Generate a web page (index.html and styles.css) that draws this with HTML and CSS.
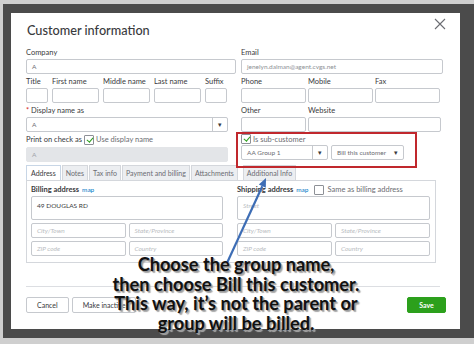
FILE: index.html
```html
<!DOCTYPE html>
<html lang="en">
<head>
    <meta charset="UTF-8">
    <meta name="viewport" content="width=device-width, initial-scale=1.0">
    <title>Customer information</title>
    <link rel="stylesheet" href="styles.css">
</head>
<body>
<div class="screen">
    <div class="frame">
        <div class="modal">
            <div class="modal-head">
                <h1>Customer information</h1>
                <svg class="close" width="12" height="12" viewBox="0 0 12 12"><path d="M1 1L11 11M11 1L1 11" stroke="#6b6c72" stroke-width="1.1" fill="none"/></svg>
            </div>

            <div class="form-top">
                <div class="col left">
                    <div class="field">
                        <label>Company</label>
                        <div class="input">A</div>
                    </div>
                    <div class="name-row">
                        <div class="field"><label>Title</label><div class="input"></div></div>
                        <div class="field"><label>First name</label><div class="input"></div></div>
                        <div class="field"><label>Middle name</label><div class="input"></div></div>
                        <div class="field"><label>Last name</label><div class="input"></div></div>
                        <div class="field"><label>Suffix</label><div class="input"></div></div>
                    </div>
                    <div class="field">
                        <label><span class="req">*</span> Display name as</label>
                        <div class="input select display-name"><span class="val">A</span><span class="arrow">&#9662;</span></div>
                    </div>
                    <div class="check-line">
                        Print on check as <span class="cb checked"></span> <span class="muted">Use display name</span>
                    </div>
                    <div class="input disabled">A</div>
                </div>

                <div class="col right">
                    <div class="field">
                        <label>Email</label>
                        <div class="input email">jenelyn.dalman@agent.cvgs.net</div>
                    </div>
                    <div class="phone-row">
                        <div class="field"><label>Phone</label><div class="input"></div></div>
                        <div class="field"><label>Mobile</label><div class="input"></div></div>
                        <div class="field"><label>Fax</label><div class="input"></div></div>
                    </div>
                    <div class="other-row">
                        <div class="field"><label>Other</label><div class="input"></div></div>
                        <div class="field"><label>Website</label><div class="input"></div></div>
                    </div>
                    <div class="check-line sub">
                        <span class="cb checked"></span> <span class="muted">Is sub-customer</span>
                    </div>
                    <div class="sub-row">
                        <div class="input select group"><span class="val">AA Group 1</span><span class="arrow">&#9662;</span></div>
                        <div class="input select bill"><span class="val">Bill this customer</span><span class="arrow">&#9662;</span></div>
                    </div>
                </div>
            </div>

            <div class="tabs">
                <span class="tab active">Address</span>
                <span class="tab">Notes</span>
                <span class="tab">Tax info</span>
                <span class="tab">Payment and billing</span>
                <span class="tab">Attachments</span>
                <span class="tab last">Additional Info</span>
            </div>
            <div class="panel">
                <div class="addr">
                    <div class="addr-head">Billing address <a>map</a></div>
                    <div class="input area">49 DOUGLAS RD</div>
                    <div class="pair">
                        <div class="input ph">City/Town</div>
                        <div class="input ph">State/Province</div>
                    </div>
                    <div class="pair">
                        <div class="input ph">ZIP code</div>
                        <div class="input ph">Country</div>
                    </div>
                </div>
                <div class="addr">
                    <div class="addr-head">Shipping address <a>map</a> <span class="cb"></span> <span class="muted">Same as billing address</span></div>
                    <div class="input area ph">Street</div>
                    <div class="pair">
                        <div class="input ph">City/Town</div>
                        <div class="input ph">State/Province</div>
                    </div>
                    <div class="pair">
                        <div class="input ph">ZIP code</div>
                        <div class="input ph">Country</div>
                    </div>
                </div>
            </div>

            <div class="footer">
                <div class="btns">
                    <span class="btn">Cancel</span>
                    <span class="btn">Make inactive</span>
                </div>
                <span class="btn save">Save</span>
            </div>
        </div>
    </div>

    <!-- annotations drawn over the screenshot -->
    <div class="red-box"></div>
    <svg class="arrow-note" width="474" height="344" viewBox="0 0 474 344">
        <line x1="227" y1="263" x2="262.3" y2="186.2" stroke="#3d6db5" stroke-width="2.2"/>
        <polygon points="266,178 265.8,187.8 258.8,184.6" fill="#3d6db5"/>
    </svg>
    <div class="caption">
        Choose the group name,<br>
        then choose Bill this customer.<br>
        This way, it’s not the parent or<br>
        group will be billed.
    </div>
</div>
</body>
</html>
```

FILE: styles.css
```css
body {
    margin: 0;
    background-color: #cfcfcf;
    font-family: Lato, "Open Sans", sans-serif;
    color: #393a3d;
}

.screen {
    position: relative;
    width: 474px;
    height: 344px;
    overflow: hidden;
}

.frame {
    margin: 4px 0 0 3px;
    padding: 9px 14px 9px 8px;
    background-color: #4b4b4b;
}

.modal {
    background-color: #fff;
    padding: 9px 17px 16px 15px;
    height: 316px;
    box-sizing: border-box;
}

.modal-head {
    display: flex;
    justify-content: space-between;
    align-items: flex-start;
    height: 16px;
    margin-bottom: 9px;
}

.modal-head h1 {
    margin: 0 0 0 1px;
    font-size: 12.7px;
    line-height: 16px;
    font-weight: 500;
    color: #393a3d;
}

.close {
    margin: -4px -3px 0 0;
}

.form-top {
    display: grid;
    grid-template-columns: 210px 202px;
    column-gap: 5px;
}

.field {
    display: flex;
    flex-direction: column;
}

.field label {
    font-size: 7.5px;
    line-height: 12px;
    color: #393a3d;
}

.req {
    color: #d52b1e;
}

.input {
    height: 15px;
    box-sizing: border-box;
    border: 1px solid #c6c9ce;
    border-radius: 2px;
    background-color: #fff;
    font-size: 6.5px;
    line-height: 13px;
    padding: 0 5px;
    color: #6b6c72;
    white-space: nowrap;
    overflow: hidden;
}

.name-row {
    display: grid;
    grid-template-columns: 22px 47px 47px 47px 22px;
    column-gap: 4px;
    margin-top: 2px;
}

.phone-row {
    display: grid;
    grid-template-columns: 65px 65px 65px;
    column-gap: 2px;
    margin-top: 2px;
}

.other-row {
    display: grid;
    grid-template-columns: 65px 133px;
    column-gap: 2px;
    margin-top: 2px;
}

.name-row + .field {
    margin-top: 2px;
}

.email {
    color: #8d9096;
}

.select {
    display: flex;
    justify-content: space-between;
    padding: 0;
}

.select .val {
    padding-left: 5px;
}

.select .arrow {
    width: 14px;
    text-align: center;
    font-size: 7px;
    color: #393a3d;
}

.display-name {
    width: 202px;
}

.display-name .arrow {
    border-left: 1px solid #c6c9ce;
}

.check-line {
    display: flex;
    align-items: center;
    gap: 2px;
    height: 13px;
    margin-top: 1px;
    font-size: 7.5px;
    color: #393a3d;
}

.muted {
    color: #6b6c72;
}

.cb {
    display: inline-block;
    width: 8px;
    height: 8px;
    border: 1px solid #8d9096;
    border-radius: 1px;
    background-color: #fff;
    position: relative;
}

.cb.checked::after {
    content: "";
    position: absolute;
    left: 2.5px;
    top: 0;
    width: 2.5px;
    height: 5px;
    border: solid #2ca01c;
    border-width: 0 1.3px 1.3px 0;
    transform: rotate(40deg);
}

.disabled {
    width: 202px;
    margin-top: 1px;
    background-color: #e3e5e8;
    border-color: #e3e5e8;
    color: #a0a3a8;
}

.sub {
    margin-top: 1px;
    height: 12px;
}

.sub-row {
    display: flex;
    gap: 3px;
}

.group {
    width: 87px;
}

.group .arrow {
    border-left: 1px solid #c6c9ce;
}

.bill {
    width: 73px;
}

.tabs {
    display: flex;
    gap: 1px;
    margin-top: 3px;
    height: 15px;
}

.tab {
    font-size: 7px;
    line-height: 14px;
    padding: 0 3px;
    background-color: #eceef1;
    border: 1px solid #d4d7dc;
    border-bottom: none;
    color: #6b6c72;
}

.tab.active {
    background-color: #fff;
    color: #393a3d;
    border-color: #c8d6e6;
    padding: 0 4px;
}

.tab.last {
    margin-left: 4px;
}

.panel {
    display: flex;
    gap: 14px;
    width: 410px;
    height: 83px;
    box-sizing: border-box;
    border: 1px solid #d4d7dc;
    padding: 3px 5px 0 4px;
}

.addr {
    width: 192px;
}

.addr + .addr {
    width: 193px;
}

.addr-head {
    display: flex;
    align-items: center;
    gap: 3px;
    height: 11px;
    font-size: 7.5px;
    font-weight: 700;
    color: #393a3d;
}

.addr-head a {
    font-weight: 400;
    color: #0077c5;
    font-size: 6.5px;
    margin-right: 3px;
}

.addr-head .muted {
    font-weight: 400;
}

.area {
    height: 24px;
    margin-top: 1px;
    line-height: 18px;
    color: #393a3d;
}

.pair {
    display: grid;
    grid-template-columns: 1fr 1fr;
    column-gap: 3px;
    margin-top: 3px;
}

.ph {
    color: #b9bcc1;
    font-style: italic;
}

.footer {
    display: flex;
    justify-content: space-between;
    align-items: flex-start;
    margin-top: 23px;
    border-top: 1px solid #dcdee2;
    padding-top: 10px;
    margin-right: 3px;
}

.btns {
    display: flex;
    gap: 3px;
}

.btn {
    height: 16px;
    box-sizing: border-box;
    border: 1px solid #c6c9ce;
    border-radius: 2px;
    font-size: 7px;
    line-height: 14px;
    padding: 0 10px;
    color: #393a3d;
}

.save {
    width: 39px;
    padding: 0;
    margin-right: -6px;
    text-align: center;
    background-color: #2ca01c;
    border-color: #2ca01c;
    color: #fff;
    font-weight: 700;
}

.red-box {
    position: absolute;
    left: 236px;
    top: 132px;
    width: 177px;
    height: 32px;
    border: 2px solid #c0282d;
}

.arrow-note {
    position: absolute;
    left: 0;
    top: 0;
}

.caption {
    position: absolute;
    left: 96px;
    top: 255px;
    width: 280px;
    text-align: center;
    font-family: Lato, sans-serif;
    font-weight: 700;
    font-size: 18.2px;
    line-height: 19.5px;
    color: #111;
    text-shadow: 1px 1px 0 #9a9a9a, 2px 2px 1px #a8a8a8;
}
```
